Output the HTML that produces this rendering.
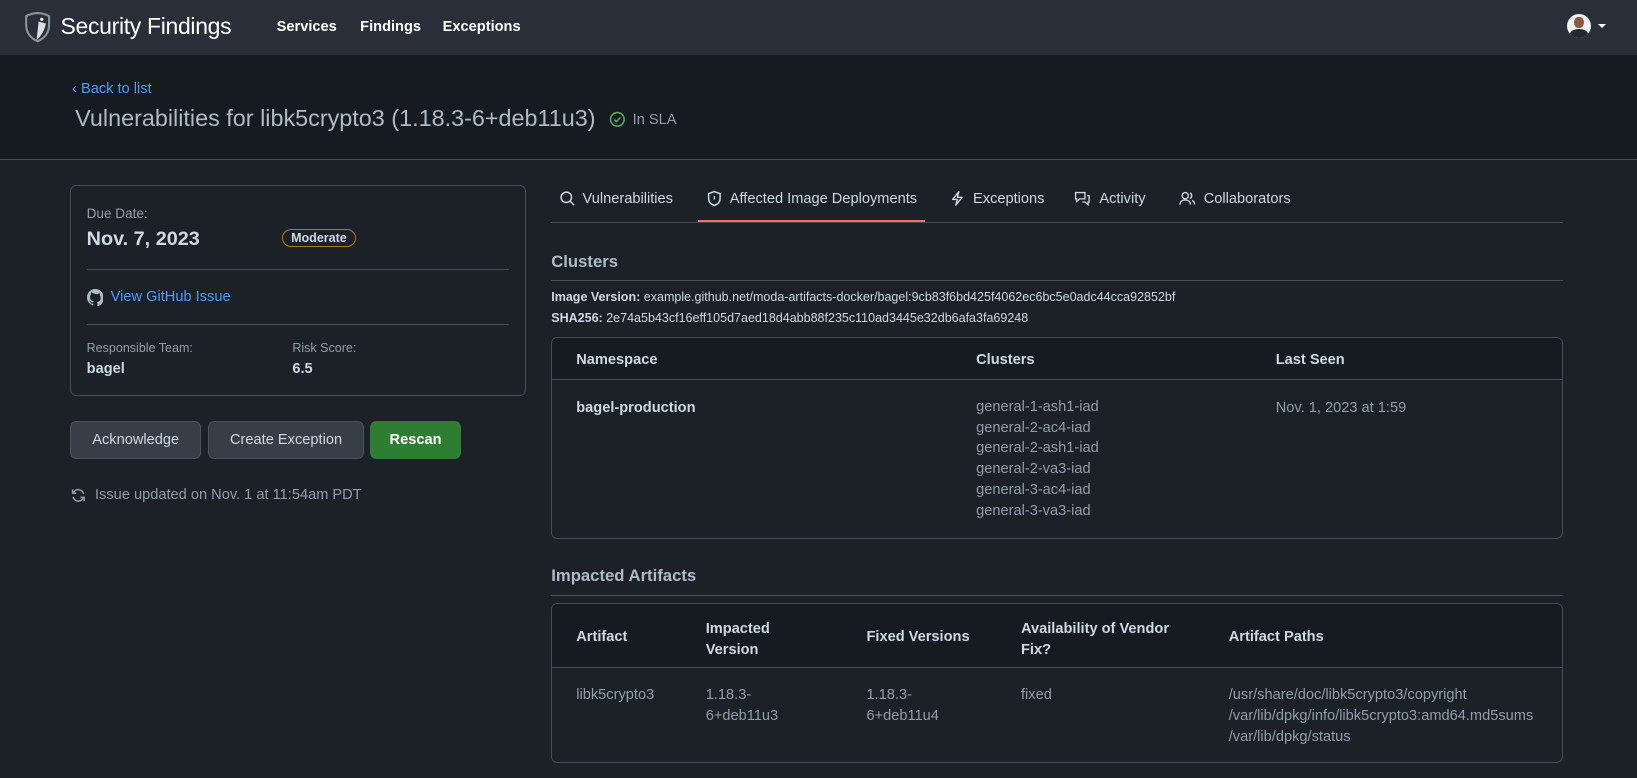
<!DOCTYPE html>
<html><head><meta charset="utf-8"><style>
*{box-sizing:border-box;margin:0;padding:0}
html,body{width:1637px;height:778px;overflow:hidden;background:#1c2128}
#w{zoom:1.04401;width:1568px;height:745px;position:relative;font-family:"Liberation Sans",sans-serif;color:#adbac7;font-size:14px}
.a{position:absolute;white-space:nowrap}
.b{font-weight:bold}
.nav{left:0;top:0;width:1568px;height:53px;background:#2a2e39}
.hdr{left:0;top:53px;width:1568px;height:100px;background:#161b22;border-bottom:1px solid #444c56}
.nl{color:#fff;font-weight:bold;font-size:14px;top:18px}
.card{left:67px;top:177px;width:437px;height:202px;border:1px solid #444c56;border-radius:6px}
.hr{height:1px;background:#444c56}
.btn{top:403px;height:37px;border:1px solid #4a525c;border-radius:6px;background:#373e47;color:#cdd9e5;font-size:14px;display:flex;align-items:center;justify-content:center}
.tab{top:183px;font-size:14px;color:#cdd9e5}
.tbl{border:1px solid #444c56;border-radius:6px;overflow:hidden;left:528px;width:969px}
.th{background:#161b22;border-bottom:1px solid #444c56;position:absolute;left:0;top:0;width:100%}
.h{font-weight:bold;color:#cdd9e5;font-size:14px}
.g{color:#909dab}
</style></head><body><div id="w">
<div class="a nav"></div>
<svg class="a" style="left:22px;top:11px" width="28" height="30" viewBox="0 0 28 30"><path d="M3 5 Q14 -1 25 5 L25 13 Q25 24 14 29 Q3 24 3 13Z" fill="none" stroke="#8b949e" stroke-width="2"/><path d="M15 10 L13 28 Q20 22 22 12Z" fill="#ddd"/><circle cx="18" cy="8" r="1.5" fill="#fff"/></svg>
<div class="a" style="left:58px;top:12px;font-size:22px;color:#fff;letter-spacing:-0.3px">Security Findings</div>
<div class="a nl" style="left:265px">Services</div>
<div class="a nl" style="left:345px">Findings</div>
<div class="a nl" style="left:424px">Exceptions</div>
<div class="a" style="left:1501px;top:13px;width:23px;height:23px;border-radius:50%;background:#f0f0f0;overflow:hidden"><div style="position:absolute;left:7px;top:3px;width:9px;height:11px;border-radius:50%;background:#8a5a40"></div><div style="position:absolute;left:3px;top:15px;width:17px;height:10px;border-radius:50% 50% 0 0;background:#1e2a30"></div></div>
<div class="a" style="left:1531px;top:23px;border-left:4px solid transparent;border-right:4px solid transparent;border-top:4px solid #fff"></div>
<div class="a hdr"></div>
<div class="a" style="left:69px;top:78px;color:#539bf5;font-size:14px">‹ Back to list</div>
<div class="a" style="left:72px;top:101px;font-size:22.4px;color:#adbac7">Vulnerabilities for libk5crypto3 (1.18.3-6+deb11u3)</div>
<svg class="a" style="left:583px;top:106px" width="16" height="16" viewBox="0 0 16 16"><circle cx="8" cy="8" r="6.5" fill="none" stroke="#57ab5a" stroke-width="1.5"/><path d="M5 8.2l2 2 4-4" fill="none" stroke="#57ab5a" stroke-width="1.5"/></svg>
<div class="a g" style="left:606px;top:107px;font-size:14px">In SLA</div>

<div class="a card"></div>
<div class="a g" style="left:83px;top:197px;font-size:13px">Due Date:</div>
<div class="a b" style="left:83px;top:218px;font-size:19px;color:#cdd9e5">Nov. 7, 2023</div>
<div class="a b" style="left:270px;top:219px;width:71px;height:18px;border:1px solid #ae7c14;border-radius:9px;font-size:12px;color:#cdd9e5;text-align:center;line-height:16px">Moderate</div>
<div class="a hr" style="left:83px;top:258px;width:405px"></div>
<svg class="a" style="left:83px;top:277px" width="16" height="16" viewBox="0 0 16 16"><path fill="#adbac7" d="M8 0C3.58 0 0 3.58 0 8c0 3.540 2.29 6.53 5.47 7.59.4.07.55-.17.55-.38v-1.33c-2.23.48-2.7-1.07-2.7-1.07-.36-.92-.89-1.170-.89-1.17-.73-.5.06-.49.06-.49.8.06 1.23.83 1.23.83.71 1.22 1.87.87 2.33.66.07-.52.28-.87.51-1.07-1.78-.2-3.65-.89-3.65-3.95 0-.87.31-1.59.82-2.15-.08-.2-.36-1.02.08-2.12 0 0 .67-.21 2.2.82A7.7 7.7 0 0 1 8 4.8c.68 0 1.36.09 2 .27 1.53-1.04 2.2-.82 2.2-.82.44 1.1.16 1.92.08 2.12.51.56.82 1.27.82 2.15 0 3.07-1.87 3.75-3.65 3.950.29.25.54.73.54 1.48v2.2c0 .21.15.46.55.38A8.01 8.01 0 0 0 16 8c0-4.42-3.58-8-8-8z"/></svg>
<div class="a" style="left:106px;top:277px;color:#539bf5;font-size:14px">View GitHub Issue</div>
<div class="a hr" style="left:83px;top:310px;width:405px"></div>
<div class="a g" style="left:83px;top:327px;font-size:12px">Responsible Team:</div>
<div class="a b" style="left:83px;top:346px;font-size:14px;color:#cdd9e5">bagel</div>
<div class="a g" style="left:280px;top:327px;font-size:12px">Risk Score:</div>
<div class="a b" style="left:280px;top:346px;font-size:14px;color:#cdd9e5">6.5</div>

<div class="a btn" style="left:67px;width:126px">Acknowledge</div>
<div class="a btn" style="left:199px;width:150px">Create Exception</div>
<div class="a btn b" style="left:354px;width:88px;background:#2e7d32;border-color:#2e7d32;color:#fff">Rescan</div>
<svg class="a" style="left:67px;top:466px" width="16" height="16" viewBox="0 0 16 16"><path d="M13 6.5A5.2 5.2 0 0 0 3.2 5.5M3 9.5a5.2 5.2 0 0 0 9.8 1" fill="none" stroke="#909dab" stroke-width="1.5"/><path d="M2.5 2.5v3.5h3.5M13.5 13.5V10H10" fill="none" stroke="#909dab" stroke-width="1.5"/></svg>
<div class="a g" style="left:91px;top:466px;font-size:14px">Issue updated on Nov. 1 at 11:54am PDT</div>

<svg class="a" style="left:535px;top:182px" width="16" height="16" viewBox="0 0 16 16"><circle cx="7" cy="7" r="5" fill="none" stroke="#cdd9e5" stroke-width="1.4"/><path d="M10.5 10.5l4 4" stroke="#cdd9e5" stroke-width="1.4"/></svg>
<div class="a tab" style="left:558px">Vulnerabilities</div>
<svg class="a" style="left:676px;top:182px" width="16" height="16" viewBox="0 0 16 16"><path d="M8 1.5l5.5 2v4.5c0 3.5-2.5 5.8-5.5 6.8C5 13.8 2.5 11.5 2.5 8V3.5z" fill="none" stroke="#cdd9e5" stroke-width="1.4"/><path d="M8 6v3" stroke="#cdd9e5" stroke-width="1.4"/></svg>
<div class="a tab" style="left:699px">Affected Image Deployments</div>
<svg class="a" style="left:909px;top:182px" width="16" height="16" viewBox="0 0 16 16"><path d="M9.5 1.5L3.5 9h4.5l-1.5 5.5L12.5 7H8z" fill="none" stroke="#cdd9e5" stroke-width="1.3" stroke-linejoin="round"/></svg>
<div class="a tab" style="left:932px">Exceptions</div>
<svg class="a" style="left:1029px;top:182px" width="16" height="16" viewBox="0 0 16 16"><path d="M1.5 2.5h9v6h-5l-3 2.5V8.5h-1z" fill="none" stroke="#cdd9e5" stroke-width="1.3"/><path d="M12.5 5.5h2v6h-1v2.5l-3-2.5H8" fill="none" stroke="#cdd9e5" stroke-width="1.3"/></svg>
<div class="a tab" style="left:1053px">Activity</div>
<svg class="a" style="left:1129px;top:182px" width="16" height="16" viewBox="0 0 16 16"><circle cx="6" cy="5.5" r="3" fill="none" stroke="#cdd9e5" stroke-width="1.3"/><path d="M1 14c0-3 2.2-4.5 5-4.5s5 1.5 5 4.5M10.5 2.8a3 3 0 0 1 0 5.4M12.5 10c1.5.6 2.5 2 2.5 4" fill="none" stroke="#cdd9e5" stroke-width="1.3"/></svg>
<div class="a tab" style="left:1153px">Collaborators</div>
<div class="a hr" style="left:528px;top:213px;width:969px"></div>
<div class="a" style="left:669px;top:211px;width:217px;height:2px;background:#f47067"></div>

<div class="a b" style="left:528px;top:241px;font-size:16px;color:#adbac7">Clusters</div>
<div class="a hr" style="left:528px;top:268px;width:969px"></div>
<div class="a" style="left:528px;top:278px;font-size:12px;color:#cdd9e5"><b>Image Version:</b> example.github.net/moda-artifacts-docker/bagel:9cb83f6bd425f4062ec6bc5e0adc44cca92852bf</div>
<div class="a" style="left:528px;top:298px;font-size:12px;color:#cdd9e5"><b>SHA256:</b> 2e74a5b43cf16eff105d7aed18d4abb88f235c110ad3445e32db6afa3fa69248</div>

<div class="a tbl" style="top:323px;height:193px">
<div class="th" style="height:40px"></div>
<div class="a h" style="left:23px;top:13px">Namespace</div>
<div class="a h" style="left:406px;top:13px">Clusters</div>
<div class="a h" style="left:693px;top:13px">Last Seen</div>
<div class="a h" style="left:23px;top:59px">bagel-production</div>
<div class="a g" style="left:406px;top:56px;line-height:20px">general-1-ash1-iad<br>general-2-ac4-iad<br>general-2-ash1-iad<br>general-2-va3-iad<br>general-3-ac4-iad<br>general-3-va3-iad</div>
<div class="a g" style="left:693px;top:59px">Nov. 1, 2023 at 1:59</div>
</div>

<div class="a b" style="left:528px;top:542px;font-size:16px;color:#adbac7">Impacted Artifacts</div>
<div class="a hr" style="left:528px;top:570px;width:969px"></div>
<div class="a tbl" style="top:578px;height:153px">
<div class="th" style="height:61px"></div>
<div class="a h" style="left:23px;top:24px">Artifact</div>
<div class="a h" style="left:147px;top:14px;line-height:20px">Impacted<br>Version</div>
<div class="a h" style="left:301px;top:24px">Fixed Versions</div>
<div class="a h" style="left:449px;top:14px;line-height:20px">Availability of Vendor<br>Fix?</div>
<div class="a h" style="left:648px;top:24px">Artifact Paths</div>
<div class="a g" style="left:23px;top:79px">libk5crypto3</div>
<div class="a g" style="left:147px;top:77px;line-height:20px">1.18.3-<br>6+deb11u3</div>
<div class="a g" style="left:301px;top:77px;line-height:20px">1.18.3-<br>6+deb11u4</div>
<div class="a g" style="left:449px;top:79px">fixed</div>
<div class="a g" style="left:648px;top:77px;line-height:20px">/usr/share/doc/libk5crypto3/copyright<br>/var/lib/dpkg/info/libk5crypto3:amd64.md5sums<br>/var/lib/dpkg/status</div>
</div>
</div></body></html>
